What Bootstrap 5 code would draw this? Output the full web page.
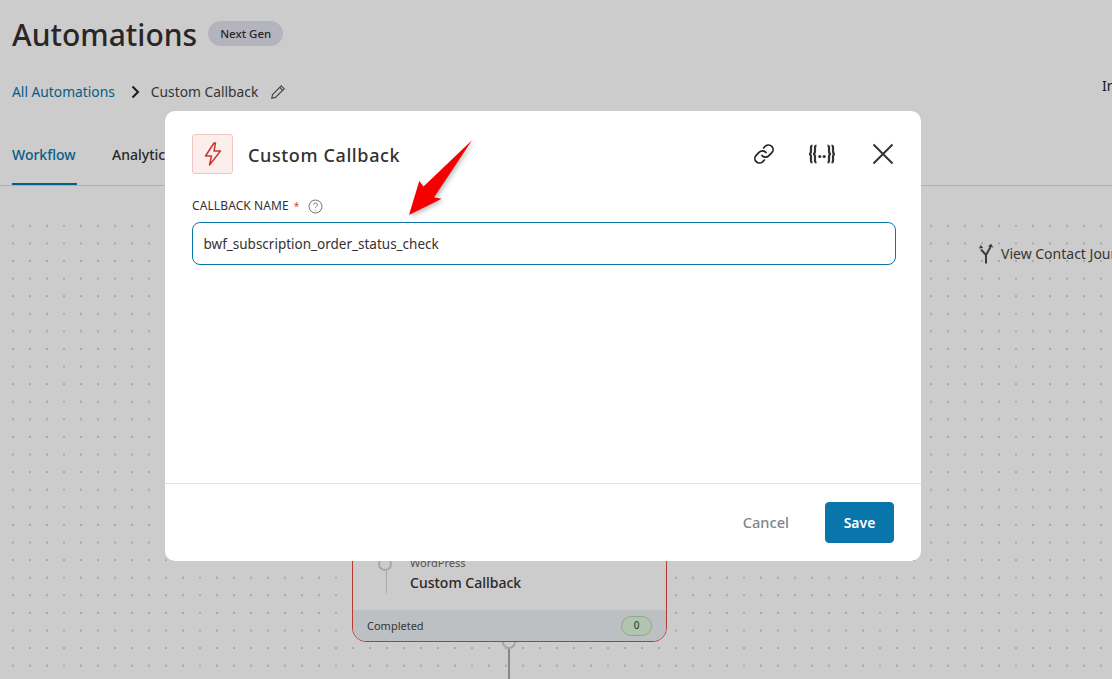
<!DOCTYPE html>
<html lang="en">
<head>
<meta charset="utf-8">
<title>Automations</title>
<link rel="stylesheet" href="https://cdn.jsdelivr.net/npm/bootstrap@5.3.0/dist/css/bootstrap.min.css">
<style>
html,body{height:100%;overflow:hidden;}
body{font-family:"Noto Sans","Open Sans",sans-serif;background:#fff;color:#353030;width:1112px;height:679px;position:relative;}
.pg-head{padding:13px 12px 0;height:186px;border-bottom:1px solid #dcdcdc;white-space:nowrap;display:flex;flex-direction:column;}
.pg-title{font-size:30px;line-height:44px;font-weight:500;margin:0;color:#353030;}
.gen-pill{background:#e2e2ee;color:#353030;font-size:11.5px;font-weight:500;border-radius:13px;padding:0 12px;height:25px;line-height:25px;margin-left:11px;margin-top:-3px;}
.crumbs{font-size:13.8px;line-height:20px;margin-top:25px;}
.crumb-link{color:#0875ab;text-decoration:none;}
.crumb-now{color:#444;}
.chev-ico{margin:0 11px 0 16px;}
.pen-ico{margin-left:12px;}
.tabs-row{margin-top:auto;font-size:14px;font-weight:500;height:52px;}
.tab-on{color:#0875ab;height:52px;width:65px;padding-top:10px;border-bottom:2px solid #0875ab;line-height:24px;}
.tab-off{color:#353030;margin-left:35px;padding-top:10px;line-height:24px;}
.intro{position:absolute;left:1102px;top:76px;font-size:14px;line-height:20px;color:#222;}
.canvas{height:493px;position:relative;}
.canvas::before{content:"";position:absolute;left:0;right:0;bottom:0;top:31.2px;background-image:radial-gradient(circle,#a6a6a6 0.6px,transparent 1.1px);background-size:17px 17.6px;background-position:4.5px 0;}
.journey{position:absolute;left:978px;top:56px;font-size:14px;line-height:24px;color:#444;white-space:nowrap;}
.journey span{margin-left:1px;}
.flow-node{position:absolute;left:352px;top:340px;width:315px;height:116px;border:1px solid #e8483e;border-radius:0 0 14px 14px;background:#fff;overflow:hidden;display:flex;flex-direction:column;}
.node-body{flex:1;position:relative;padding:28px 0 0 57px;}
.node-kicker{font-size:11px;line-height:16px;color:#666;}
.node-name{font-size:14px;line-height:22px;font-weight:500;color:#353030;margin-top:1px;}
.node-pin{position:absolute;left:25px;top:30px;width:14px;height:14px;border:2px solid #d4d4d4;border-radius:50%;background:#fff;}
.node-stem{position:absolute;left:33px;top:44px;width:1px;height:22px;background:#d4d4d4;}
.node-foot{height:31px;background:#ecf0f3;padding:0 14px;font-size:11px;color:#444;}
.node-foot>span:first-child{margin-top:2px;}
.count-pill{width:31px;height:20px;border-radius:10px;background:#dff5dc;border:1px solid #a9d8a4;font-size:10px;font-weight:500;color:#2c6b2a;}
.stem-dot{position:absolute;left:502px;top:456px;width:14px;height:7px;border:2px solid #d0d0d0;border-top:0;border-radius:0 0 7px 7px;background:#fff;}
.stem-line{position:absolute;left:508px;top:463px;width:2px;height:30px;background:#a9a9a9;}
.shade{position:absolute;inset:0;background:rgba(0,0,0,.2);}
.dialog-box{position:absolute;left:165px;top:111px;width:756px;height:450px;background:#fff;border-radius:10px;display:flex;flex-direction:column;overflow:hidden;}
.dlg-top{padding:23px 26px 0 27px;height:85px;}
.dlg-row{height:40px;}
.bolt-box{width:41px;height:40px;border:1px solid #f0c4c0;background:#fdeeee;border-radius:3px;}
.dlg-title{font-size:18px;font-weight:500;line-height:24px;color:#353030;margin:1px 0 0 15px;letter-spacing:.62px;}
.brace-ico{margin:0 35px 0 32px;}
.dlg-fields{padding:0 25px 0 27px;flex:1;}
.field-cap{font-size:12px;line-height:16px;color:#353030;margin:1px 0 7px;height:18px;letter-spacing:.1px;}
.req-mark{color:#e0433a;margin-left:5px;font-size:10px;}
.help-ico{margin-left:9px;}
.cb-input{height:43px;border:1.5px solid #0875ab;border-radius:8px;font-size:13.5px;color:#353030;padding:0 10.5px;font-family:inherit;box-shadow:none;}
.cb-input:focus{border-color:#0875ab;box-shadow:none;color:#353030;}
.dlg-foot{height:78px;border-top:1px solid #e2e2e2;padding:0 27px 0 0;}
.cancel-txt{color:#82838e;font-size:14.6px;font-weight:500;padding:0;border:0;background:none;margin-right:36px;}
.save-btn{background:#0875ab;border-color:#0875ab;color:#fff;width:69px;height:41px;font-size:14px;font-weight:600;padding:0;border-radius:4px;}
.save-btn:hover{background:#0875ab;color:#fff;}
.red-arrow{position:absolute;left:400px;top:132px;width:80px;height:90px;filter:drop-shadow(2px 2px 2px rgba(0,0,0,.25));}
</style>
</head>
<body>
<header class="pg-head">
  <div class="d-flex align-items-center">
    <h1 class="pg-title">Automations</h1>
    <span class="gen-pill">Next Gen</span>
  </div>
  <div class="crumbs d-flex align-items-center">
    <a class="crumb-link" href="#">All Automations</a>
    <svg class="chev-ico" width="9" height="14" viewBox="0 0 9 14" fill="none" stroke="#222" stroke-width="2"><path d="M1.500 1.500 7 7l-5.500 5.500"/></svg>
    <span class="crumb-now">Custom Callback</span>
    <svg class="pen-ico" width="16" height="16" viewBox="0 0 16 16" fill="none" stroke="#555" stroke-width="1.100"><path d="M11.300 1.800l2.900 2.900-8.700 8.700-3.800.9.900-3.800zM9.700 3.400l2.900 2.900"/></svg>
  </div>
  <nav class="tabs-row d-flex">
    <div class="tab-on">Workflow</div>
    <div class="tab-off">Analytics</div>
  </nav>
</header>
<div class="intro">Insights</div>
<main class="canvas">
  <div class="journey d-flex align-items-center">
    <svg class="me-1" width="18" height="22" viewBox="0 0 18 22" fill="none" stroke="#4a4a4a" stroke-width="2"><path d="M8 20.500V12L3 6.500M8 12l4.500-8"/><path d="M.8 5.500 2.800 2l2.400 3zM10 3.500 13 .8l2.400 3.600z" fill="#4a4a4a" stroke="none"/></svg>
    <span>View Contact Journey</span>
  </div>
  <section class="flow-node">
    <div class="node-body">
      <span class="node-pin"></span><span class="node-stem"></span>
      <div class="node-kicker">WordPress</div>
      <div class="node-name">Custom Callback</div>
    </div>
    <div class="node-foot d-flex align-items-center justify-content-between">
      <span>Completed</span>
      <span class="count-pill d-flex align-items-center justify-content-center">0</span>
    </div>
  </section>
  <span class="stem-dot"></span><span class="stem-line"></span>
</main>
<div class="shade"></div>
<div class="dialog-box">
  <div class="dlg-top">
    <div class="dlg-row d-flex align-items-center">
      <div class="bolt-box d-flex align-items-center justify-content-center">
        <svg width="18" height="26" viewBox="0 0 18 26" fill="none" stroke="#c9372c" stroke-width="1.500" stroke-linejoin="round"><path d="M10 2 1.500 15h6L5.500 24l11-14H10l1.500-8z"/></svg>
      </div>
      <div class="dlg-title">Custom Callback</div>
      <div class="ms-auto d-flex align-items-center">
        <svg width="24" height="24" viewBox="0 0 24 24" fill="none" stroke="#222" stroke-width="1.700" stroke-linecap="round"><path d="M10 13.500a4.500 4.500 0 0 0 6.700.4l3.200-3.200a4.600 4.600 0 0 0-6.500-6.500l-1.800 1.800"/><path d="M14 10.500a4.500 4.500 0 0 0-6.700-.4l-3.200 3.200a4.600 4.600 0 0 0 6.500 6.500l1.800-1.800"/></svg>
        <svg class="brace-ico" width="28" height="20" viewBox="0 0 28 20" fill="none" stroke="#333" stroke-width="2.200"><path d="M4.500 1.500C2.500 1.500 3 4 3 7c0 2-.8 3-2 3 1.200 0 2 1 2 3 0 3-.5 5.500 1.500 5.500M8.500 1.500C6.500 1.500 7 4 7 7c0 2-.8 3-2 3 1.200 0 2 1 2 3 0 3-.5 5.500 1.500 5.500M19.500 1.500c2 0 1.500 2.500 1.500 5.500 0 2 .8 3 2 3-1.200 0-2 1-2 3 0 3 .5 5.500-1.500 5.500M23.500 1.500c2 0 1.500 2.500 1.500 5.500 0 2 .8 3 2 3-1.200 0-2 1-2 3 0 3 .5 5.500-1.500 5.500"/><circle cx="11.800" cy="12.500" r="1.600" fill="#333" stroke="none"/><circle cx="16.200" cy="12.500" r="1.600" fill="#333" stroke="none"/></svg>
        <svg width="24" height="24" viewBox="0 0 24 24" fill="none" stroke="#333" stroke-width="2"><path d="M2.500 2.500l19 19M21.500 2.500l-19 19"/></svg>
      </div>
    </div>
  </div>
  <div class="dlg-fields">
    <label class="field-cap d-flex align-items-center" for="cbname">CALLBACK NAME <span class="req-mark">*</span>
      <svg class="help-ico" width="15" height="15" viewBox="0 0 15 15" fill="none" stroke="#777" stroke-width="1"><circle cx="7.500" cy="7.500" r="6.500"/><path d="M5.600 5.900c.1-1.200 1-1.900 2-1.900 1.100 0 1.900.8 1.900 1.700 0 1.500-2 1.500-2 3"/><circle cx="7.500" cy="11" r=".6" fill="#777" stroke="none"/></svg>
    </label>
    <input id="cbname" class="form-control cb-input" type="text" value="bwf_subscription_order_status_check">
  </div>
  <div class="dlg-foot d-flex align-items-center justify-content-end">
    <button type="button" class="btn cancel-txt">Cancel</button>
    <button type="button" class="btn save-btn">Save</button>
  </div>
</div>
<svg class="red-arrow" viewBox="0 0 80 90"><path d="M9 83 19.300 49 23.500 54.500 72 8.300 34 65.500 41.700 66.700z" fill="#f40000"/></svg>
</body>
</html>
